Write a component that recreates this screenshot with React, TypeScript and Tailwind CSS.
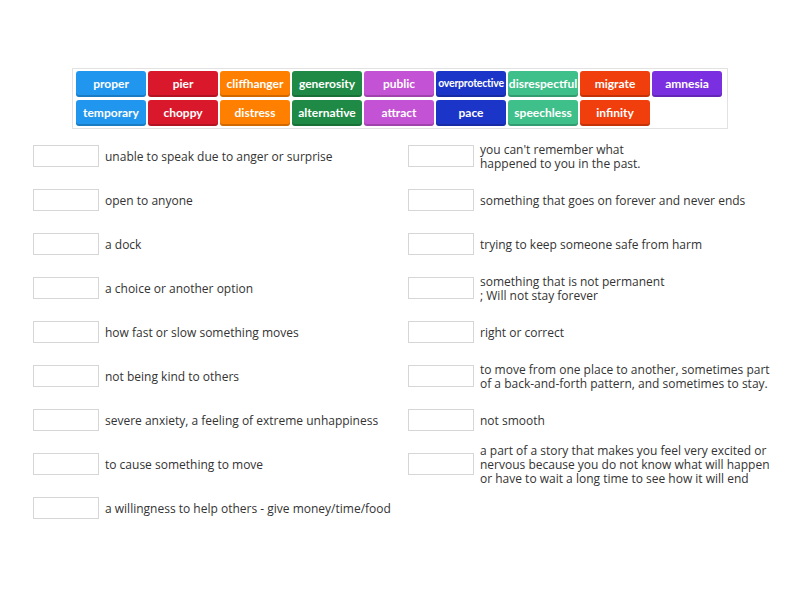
import React from 'react';

const tiles = [
  { label: 'proper', bg: 'bg-[#2196ee]' },
  { label: 'pier', bg: 'bg-[#d9192b]' },
  { label: 'cliffhanger', bg: 'bg-[#ff8000]' },
  { label: 'generosity', bg: 'bg-[#1f8a45]' },
  { label: 'public', bg: 'bg-[#c452d4]' },
  { label: 'overprotective', bg: 'bg-[#1c35c9]', small: true },
  { label: 'disrespectful', bg: 'bg-[#3fbf8a]' },
  { label: 'migrate', bg: 'bg-[#f03e0c]' },
  { label: 'amnesia', bg: 'bg-[#7a2fe0]' },
  { label: 'temporary', bg: 'bg-[#2196ee]' },
  { label: 'choppy', bg: 'bg-[#d9192b]' },
  { label: 'distress', bg: 'bg-[#ff8000]' },
  { label: 'alternative', bg: 'bg-[#1f8a45]' },
  { label: 'attract', bg: 'bg-[#c452d4]' },
  { label: 'pace', bg: 'bg-[#1c35c9]' },
  { label: 'speechless', bg: 'bg-[#3fbf8a]' },
  { label: 'infinity', bg: 'bg-[#f03e0c]' },
];

const left = [
  ['unable to speak due to anger or surprise'],
  ['open to anyone'],
  ['a dock'],
  ['a choice or another option'],
  ['how fast or slow something moves'],
  ['not being kind to others'],
  ['severe anxiety, a feeling of extreme unhappiness'],
  ['to cause something to move'],
  ['a willingness to help others - give money/time/food'],
];

const right = [
  ["you can't remember what", 'happened to you in the past.'],
  ['something that goes on forever and never ends'],
  ['trying to keep someone safe from harm'],
  ['something that is not permanent', '; Will not stay forever'],
  ['right or correct'],
  ['to move from one place to another, sometimes part', 'of a back-and-forth pattern, and sometimes to stay.'],
  ['not smooth'],
  [
    'a part of a story that makes you feel very excited or',
    'nervous because you do not know what will happen',
    'or have to wait a long time to see how it will end',
  ],
];

const Row = ({ lines }: { lines: string[] }) => (
  <div className="flex h-[22px] items-center">
    <div className="h-[22px] w-[66px] shrink-0 border border-[#d6d6d6] bg-white" />
    <div
      className="ml-[6px] mt-[2px] text-[12px] leading-[14px] text-[#333]"
      style={{ fontFamily: '"Open Sans", Lato, sans-serif' }}
    >
      {lines.map((l, i) => (
        <div key={i} className="whitespace-nowrap">{l}</div>
      ))}
    </div>
  </div>
);

const App = () => {
  return (
    <div className="h-[600px] w-[800px] bg-white pt-[68px]" style={{ fontFamily: 'Lato, "Open Sans", sans-serif' }}>
      <div className="mx-auto w-[656px] border border-[#e2e2e2] px-[3px] py-[2px]">
        <div className="grid grid-cols-[repeat(9,70px)] gap-x-[2px] gap-y-[3px]">
          {tiles.map((t) => (
            <div
              key={t.label}
              className={`${t.bg} flex h-[26px] items-center justify-center rounded-[3px] font-bold text-white shadow-[inset_0_-2px_0_rgba(0,0,0,0.18)] ${t.small ? 'text-[10.5px] tracking-[-0.2px]' : 'text-[12px]'}`}
            >
              {t.label}
            </div>
          ))}
        </div>
      </div>
      <div className="mt-[16px] flex pl-[33px]">
        <div className="flex w-[375px] flex-col gap-[22px]">
          {left.map((l, i) => (
            <Row key={i} lines={l} />
          ))}
        </div>
        <div className="flex flex-col gap-[22px]">
          {right.map((l, i) => (
            <Row key={i} lines={l} />
          ))}
        </div>
      </div>
    </div>
  );
};

export default App;
